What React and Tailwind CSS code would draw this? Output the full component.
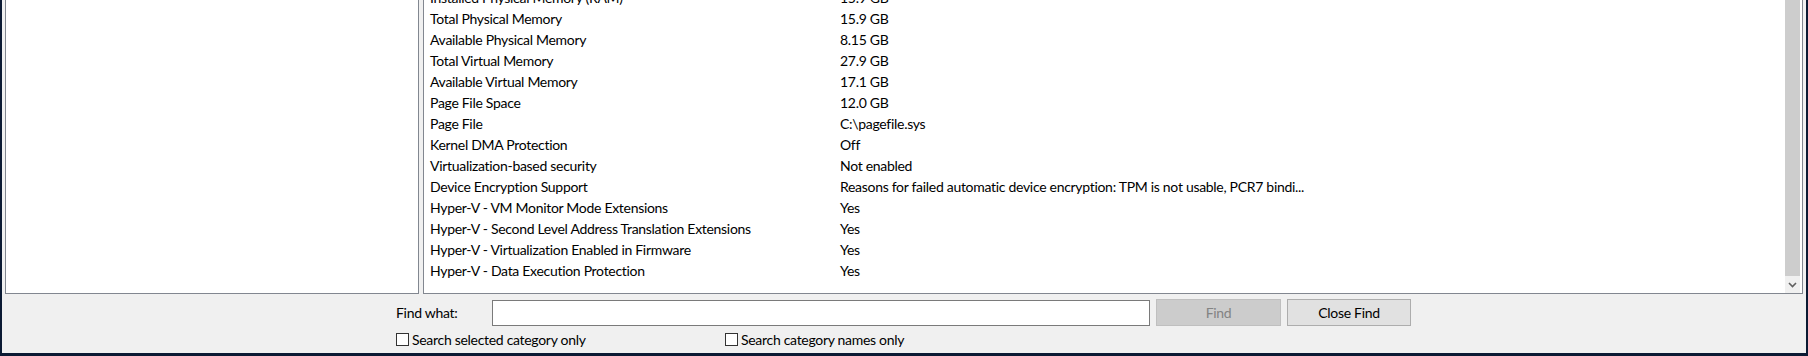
import React from "react";

const rows = [
  ["Installed Physical Memory (RAM)", "15.9 GB"],
  ["Total Physical Memory", "15.9 GB"],
  ["Available Physical Memory", "8.15 GB"],
  ["Total Virtual Memory", "27.9 GB"],
  ["Available Virtual Memory", "17.1 GB"],
  ["Page File Space", "12.0 GB"],
  ["Page File", "C:\\pagefile.sys"],
  ["Kernel DMA Protection", "Off"],
  ["Virtualization-based security", "Not enabled"],
  ["Device Encryption Support", "Reasons for failed automatic device encryption: TPM is not usable, PCR7 bindi..."],
  ["Hyper-V - VM Monitor Mode Extensions", "Yes"],
  ["Hyper-V - Second Level Address Translation Extensions", "Yes"],
  ["Hyper-V - Virtualization Enabled in Firmware", "Yes"],
  ["Hyper-V - Data Execution Protection", "Yes"],
];

function Check({ label }) {
  return (
    <label className="flex items-center gap-[3px]">
      <span className="block w-[13px] h-[13px] border border-[#333333] bg-white" />
      <span>{label}</span>
    </label>
  );
}

export default function App() {
  return (
    <div
      className="w-[1808px] h-[356px] bg-[#0b1a33] overflow-hidden text-[14px] tracking-[-0.3px] text-black"
      style={{ fontFamily: 'Lato, "Noto Sans", sans-serif' }}
    >
      <div className="ml-[2px] w-[1804px] h-[353px] bg-[#f0f0f0] flex flex-col">
        <div className="flex h-[294px] pl-[3px] pr-[3px] gap-[4px]">
          <div className="w-[414px] h-[294px] bg-white border-r border-l border-b border-[#828790]" />
          <div className="flex-1 h-[294px] bg-white border-r border-l border-b border-[#828790] flex overflow-hidden">
            <div className="flex-1 pl-[6px] mt-[-13px]">
              {rows.map(([k, v]) => (
                <div key={k} className="flex h-[21px] items-center leading-[21px] whitespace-nowrap">
                  <div className="w-[410px]">{k}</div>
                  <div>{v}</div>
                </div>
              ))}
            </div>
            <div className="w-[15px] h-full flex flex-col mr-[2px]">
              <div className="flex-1 bg-[#cdcdcd]" />
              <div className="h-[17px] bg-[#f0f0f0] flex items-center justify-center">
                <svg width="9" height="6" viewBox="0 0 9 6">
                  <path d="M1 1 L4.5 4.5 L8 1" fill="none" stroke="#606060" strokeWidth="1.6" />
                </svg>
              </div>
            </div>
          </div>
        </div>
        <div className="flex items-center h-[34px] pl-[394px] pt-[3px]">
          <div className="w-[96px]">Find what:</div>
          <div className="w-[658px] h-[26px] bg-white border border-[#7a7a7a]" />
          <div className="ml-[6px] w-[125px] h-[27px] bg-[#cccccc] border border-[#bfbfbf] text-[#838383] flex items-center justify-center">
            Find
          </div>
          <div className="ml-[6px] w-[124px] h-[27px] bg-[#e1e1e1] border border-[#adadad] flex items-center justify-center">
            Close Find
          </div>
        </div>
        <div className="flex items-center h-[22px] pl-[394px] gap-0">
          <div className="w-[329px]">
            <Check label="Search selected category only" />
          </div>
          <Check label="Search category names only" />
        </div>
      </div>
    </div>
  );
}
